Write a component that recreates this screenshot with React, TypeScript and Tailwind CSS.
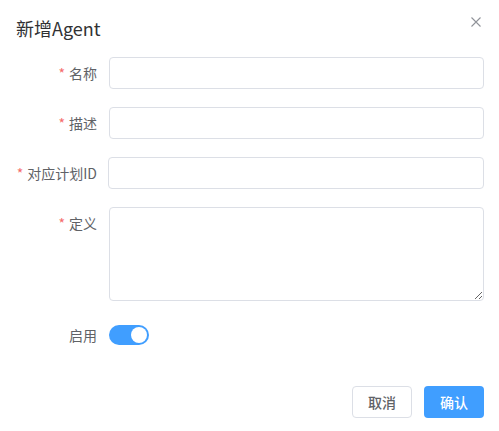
import { useState } from 'react';

const Label = ({ text, required = true }: { text: string; required?: boolean }) => (
  <label className="w-[109px] shrink-0 pr-3 text-right text-sm leading-8 text-[#606266] whitespace-nowrap">
    {required && <span className="mr-1 text-[#f56c6c]">*</span>}
    {text}
  </label>
);

export default function App() {
  const [enabled, setEnabled] = useState(true);

  return (
    <div className="w-[499px] h-[431px] bg-white font-['Noto_Sans_CJK_SC','Noto_Sans',sans-serif]">
      {/* header */}
      <div className="flex items-start justify-between pl-4 pr-[18px] pt-4 h-[57px]">
        <span className="text-lg leading-6 text-[#303133]">新增Agent</span>
        <button className="mt-[1px] text-[#909399]">
          <svg width="10" height="10" viewBox="0 0 10 10" fill="none" stroke="currentColor" strokeWidth="1.1">
            <path d="M0.5 0.5 L9.5 9.5 M9.5 0.5 L0.5 9.5" />
          </svg>
        </button>
      </div>

      {/* form */}
      <form className="pr-[15px]" onSubmit={(e) => e.preventDefault()}>
        <div className="flex mb-[18px]">
          <Label text="名称" />
          <input className="h-8 flex-1 rounded border border-[#dcdfe6] px-[15px] text-sm text-[#606266] outline-none" />
        </div>
        <div className="flex mb-[18px]">
          <Label text="描述" />
          <input className="h-8 flex-1 rounded border border-[#dcdfe6] px-[15px] text-sm text-[#606266] outline-none" />
        </div>
        <div className="flex mb-[18px]">
          <Label text="对应计划ID" />
          <input className="-ml-px h-8 flex-1 rounded border border-[#dcdfe6] px-[15px] text-sm text-[#606266] outline-none" />
        </div>
        <div className="flex mb-[18px]">
          <Label text="定义" />
          <textarea className="h-[94px] flex-1 rounded border border-[#dcdfe6] px-[15px] py-[5px] text-sm text-[#606266] outline-none" />
        </div>
        <div className="flex items-center h-8">
          <Label text="启用" required={false} />
          <button
            type="button"
            onClick={() => setEnabled(!enabled)}
            className={
              enabled
                ? 'relative h-5 w-10 rounded-full bg-[#409eff]'
                : 'relative h-5 w-10 rounded-full bg-[#dcdfe6]'
            }
          >
            <span
              className={
                enabled
                  ? 'absolute top-[2px] left-[22px] h-4 w-4 rounded-full bg-white'
                  : 'absolute top-[2px] left-[2px] h-4 w-4 rounded-full bg-white'
              }
            />
          </button>
        </div>
      </form>

      {/* footer */}
      <div className="mt-[35px] flex justify-end gap-3 pr-[15px]">
        <button className="h-8 w-[60px] rounded border border-[#dcdfe6] bg-white text-sm font-medium text-[#606266]">
          取消
        </button>
        <button className="h-8 w-[60px] rounded bg-[#409eff] text-sm font-medium text-white">
          确认
        </button>
      </div>
    </div>
  );
}
